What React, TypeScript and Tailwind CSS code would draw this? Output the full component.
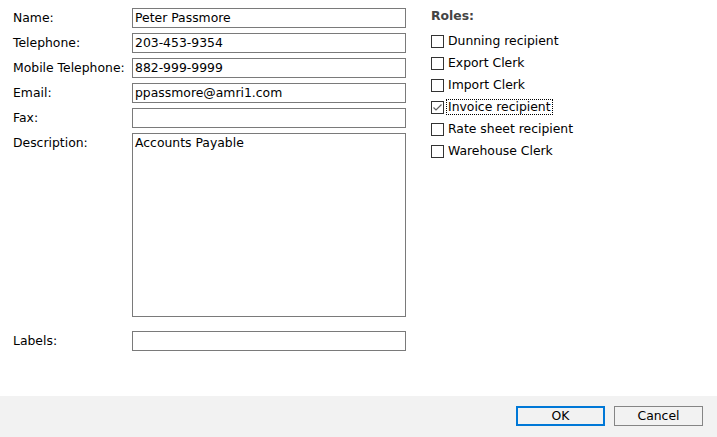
import React from "react";

const font = { fontFamily: '"DejaVu Sans", Verdana, sans-serif' };

function Field({ label, value }: { label: string; value: string }) {
  return (
    <div className="flex h-[20px] items-center">
      <div className="w-[132px] shrink-0 whitespace-nowrap pl-[13px] text-[12.4px] leading-[14px] text-black">{label}</div>
      <div className="flex h-[20px] w-[274px] shrink-0 items-center whitespace-nowrap border border-[#7a7a7a] bg-white px-[2px] text-[12.4px] leading-[14px] text-black">
        {value}
      </div>
    </div>
  );
}

function Check({ label, checked, focused }: { label: string; checked?: boolean; focused?: boolean }) {
  return (
    <div className="flex h-[22px] items-center">
      <div className="flex h-[13px] w-[13px] shrink-0 items-center justify-center border border-[#333333] bg-white">
        {checked && (
          <svg width="11" height="11" viewBox="0 0 11 11">
            <path d="M1.5 5.5 L4 8 L9.5 2.5" fill="none" stroke="#606060" strokeWidth="1.2" />
          </svg>
        )}
      </div>
      <div
        className={
          "ml-[3px] whitespace-nowrap px-[1px] text-[12.4px] leading-[14px] text-black " +
          (focused ? "outline-1 outline-dotted outline-black" : "")
        }
      >
        {label}
      </div>
    </div>
  );
}

export default function App() {
  return (
    <div className="flex h-[437px] w-[717px] flex-col bg-white" style={font}>
      <div className="flex h-[396px]">
        <div className="flex w-[431px] shrink-0 flex-col pt-[8px]">
          <div className="flex flex-col gap-[5px]">
            <Field label="Name:" value="Peter Passmore" />
            <Field label="Telephone:" value="203-453-9354" />
            <Field label="Mobile Telephone:" value="882-999-9999" />
            <Field label="Email:" value="ppassmore@amri1.com" />
            <Field label="Fax:" value="" />
            <div className="flex">
              <div className="w-[132px] shrink-0 whitespace-nowrap pl-[13px] pt-[3px] text-[12.4px] leading-[14px] text-black">Description:</div>
              <div className="h-[184px] w-[274px] shrink-0 border border-[#7a7a7a] bg-white px-[2px] pt-[2px] text-[12.4px] leading-[14px] text-black">
                Accounts Payable
              </div>
            </div>
          </div>
          <div className="mt-[14px]">
            <Field label="Labels:" value="" />
          </div>
        </div>
        <div className="flex flex-col pt-[9px]">
          <div className="text-[12.4px] font-bold leading-[14px] text-[#444444]">Roles:</div>
          <div className="mt-[7px] flex flex-col">
            <Check label="Dunning recipient" />
            <Check label="Export Clerk" />
            <Check label="Import Clerk" />
            <Check label="Invoice recipient" checked focused />
            <Check label="Rate sheet recipient" />
            <Check label="Warehouse Clerk" />
          </div>
        </div>
      </div>
      <div className="flex flex-1 justify-end gap-[9px] bg-[#f2f2f2] pr-[14px] pt-[10px]">
        <button className="h-[20px] w-[89px] border-2 border-[#0078d7] bg-[#f2f2f2] text-[12.4px] leading-[14px] text-black">
          OK
        </button>
        <button className="h-[20px] w-[89px] border border-[#858585] bg-[#f2f2f2] text-[12.4px] leading-[14px] text-black">
          Cancel
        </button>
      </div>
    </div>
  );
}
